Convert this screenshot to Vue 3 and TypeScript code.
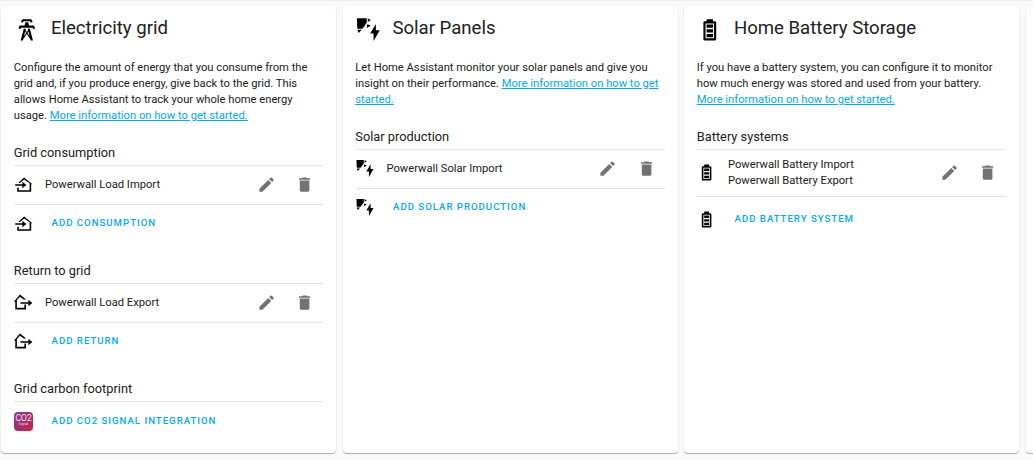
<script setup lang="ts">
interface Row { lines: string[] }
const mdi = {
  tower: 'M8.28,5.45L6.5,4.55L7.76,2H16.23L17.5,4.55L15.72,5.44L15,4H9L8.28,5.45M18.62,8H14.09L13.3,5H10.7L9.91,8H5.38L4.1,10.55L5.89,11.44L6.62,10H17.38L18.1,11.45L19.89,10.56L18.62,8M17.77,22H15.7L15.46,21.1L12,15.9L8.53,21.1L8.3,22H6.23L9.12,11H11.19L10.83,12.35L12,14.1L13.16,12.35L12.81,11H14.88L17.77,22M11.4,15L10.5,13.65L9.32,18.13L11.4,15M14.68,18.12L13.5,13.64L12.6,15L14.68,18.12Z',
  solar: 'M1.8 1.2H11V5.2L8.6 8.8L7 11H2.2ZM12 1.2L14.8 3L12 4.8ZM11.2 6.8L14.8 8L11.2 10.2ZM2.2 12H6.4L3.4 15ZM19.5 6.5L14.2 15.5H17.4V22.5L23.2 12.5H19.6Z',
  battery: 'M16,20H8V6H16M16.67,4H15V2H9V4H7.33A1.33,1.33 0 0,0 6,5.33V20.67C6,21.4 6.6,22 7.33,22H16.67A1.33,1.33 0 0,0 18,20.67V5.33C18,4.6 17.4,4 16.67,4M15,16H9V19H15V16M15,7H9V10H15V7M15,11.5H9V14.5H15V11.5Z',
  homeImport: 'M12.7 3L23 11.5H21.5V21H4V16H6V19H19.5V10.3L12.7 5.6L7.5 10H5.2ZM1.5 11.5H10.5V8.5L15.5 12.5L10.5 16.5V13.5H1.5Z',
  homeExport: 'M7.5 2L15.2 8H12.2L7.5 4.6L3.6 8.8V18.5H13V14.5H15V20.5H1.6V11H-.2ZM8 11.5H18V8.5L23 12.5L18 16.5V13.5H8Z',
  pencil: 'M20.71,7.04C21.1,6.65 21.1,6 20.71,5.63L18.37,3.29C18,2.9 17.35,2.9 16.96,3.29L15.12,5.12L18.87,8.87M3,17.25V21H6.75L17.81,9.93L14.06,6.18L3,17.25Z',
  trash: 'M19,4H15.5L14.5,3H9.5L8.5,4H5V6H19M6,19A2,2 0 0,0 8,21H16A2,2 0 0,0 18,19V7H6V19Z',
}
const gridRows: Row[] = [{ lines: ['Powerwall Load Import'] }]
const returnRows: Row[] = [{ lines: ['Powerwall Load Export'] }]
const solarRows: Row[] = [{ lines: ['Powerwall Solar Import'] }]
const batteryRows: Row[] = [{ lines: ['Powerwall Battery Import', 'Powerwall Battery Export'] }]
const linkText = 'More information on how to get started.'
</script>

<template>
  <div class="page">
    <section class="card">
      <header class="head">
        <svg class="head-icon" viewBox="0 0 24 24"><path :d="mdi.tower" /></svg>
        <h2>Electricity grid</h2>
      </header>
      <p class="desc">Configure the amount of energy that you consume from the grid and, if you produce energy, give back to the grid. This allows Home Assistant to track your whole home energy usage. <a href="#">{{ linkText }}</a></p>

      <h3>Grid consumption</h3>
      <div v-for="r in gridRows" :key="r.lines[0]" class="row">
        <svg class="icon" viewBox="0 0 24 24"><path :d="mdi.homeImport" /></svg>
        <div class="label"><div v-for="l in r.lines" :key="l">{{ l }}</div></div>
        <svg class="act" viewBox="0 0 24 24"><path :d="mdi.pencil" /></svg>
        <svg class="act" viewBox="0 0 24 24"><path :d="mdi.trash" /></svg>
      </div>
      <div class="add">
        <svg class="icon" viewBox="0 0 24 24"><path :d="mdi.homeImport" /></svg>
        <button type="button">ADD CONSUMPTION</button>
      </div>

      <h3 class="next">Return to grid</h3>
      <div v-for="r in returnRows" :key="r.lines[0]" class="row">
        <svg class="icon" viewBox="0 0 24 24"><path :d="mdi.homeExport" /></svg>
        <div class="label"><div v-for="l in r.lines" :key="l">{{ l }}</div></div>
        <svg class="act" viewBox="0 0 24 24"><path :d="mdi.pencil" /></svg>
        <svg class="act" viewBox="0 0 24 24"><path :d="mdi.trash" /></svg>
      </div>
      <div class="add">
        <svg class="icon" viewBox="0 0 24 24"><path :d="mdi.homeExport" /></svg>
        <button type="button">ADD RETURN</button>
      </div>

      <h3 class="next">Grid carbon footprint</h3>
      <div class="add co2-row">
        <div class="co2"><span class="co2-a">CO2</span><span class="co2-b">Signal</span></div>
        <button type="button">ADD CO2 SIGNAL INTEGRATION</button>
      </div>
    </section>

    <section class="card">
      <header class="head">
        <svg class="head-icon" viewBox="0 0 24 24"><path :d="mdi.solar" /></svg>
        <h2>Solar Panels</h2>
      </header>
      <p class="desc">Let Home Assistant monitor your solar panels and give you insight on their performance. <a href="#">{{ linkText }}</a></p>
      <h3>Solar production</h3>
      <div v-for="r in solarRows" :key="r.lines[0]" class="row">
        <svg class="icon" viewBox="0 0 24 24"><path :d="mdi.solar" /></svg>
        <div class="label"><div v-for="l in r.lines" :key="l">{{ l }}</div></div>
        <svg class="act" viewBox="0 0 24 24"><path :d="mdi.pencil" /></svg>
        <svg class="act" viewBox="0 0 24 24"><path :d="mdi.trash" /></svg>
      </div>
      <div class="add">
        <svg class="icon" viewBox="0 0 24 24"><path :d="mdi.solar" /></svg>
        <button type="button">ADD SOLAR PRODUCTION</button>
      </div>
    </section>

    <section class="card">
      <header class="head">
        <svg class="head-icon" viewBox="0 0 24 24"><path :d="mdi.battery" /></svg>
        <h2>Home Battery Storage</h2>
      </header>
      <p class="desc">If you have a battery system, you can configure it to monitor how much energy was stored and used from your battery. <a href="#">{{ linkText }}</a></p>
      <h3>Battery systems</h3>
      <div v-for="r in batteryRows" :key="r.lines[0]" class="row tall">
        <svg class="icon" viewBox="0 0 24 24"><path :d="mdi.battery" /></svg>
        <div class="label"><div v-for="l in r.lines" :key="l">{{ l }}</div></div>
        <svg class="act" viewBox="0 0 24 24"><path :d="mdi.pencil" /></svg>
        <svg class="act" viewBox="0 0 24 24"><path :d="mdi.trash" /></svg>
      </div>
      <div class="add tall-add">
        <svg class="icon" viewBox="0 0 24 24"><path :d="mdi.battery" /></svg>
        <button type="button">ADD BATTERY SYSTEM</button>
      </div>
    </section>

    <section class="card"></section>
  </div>
</template>

<style scoped>
.page {
  height: 460px;
  width: 1033px;
  box-sizing: border-box;
  overflow: hidden;
  background: #fafafa;
  border-top: 1px solid #eeeeee;
  padding: 5px 0 0 1px;
  display: grid;
  grid-template-columns: repeat(4, 335px);
  grid-template-rows: 447px;
  column-gap: 6.5px;
  font-family: Roboto, "Liberation Sans", sans-serif;
  color: #212121;
}
.card {
  background: #ffffff;
  border-radius: 4px;
  box-shadow: 0 1px 1px rgba(0, 0, 0, 0.3), 0 0 2px rgba(0, 0, 0, 0.06);
  padding: 0 12.8px;
  box-sizing: border-box;
}
.head {
  display: flex;
  align-items: center;
  height: 44px;
  gap: 11.5px;
}
.head-icon {
  width: 25.6px;
  height: 25.6px;
  flex: none;
  margin-top: 3px;
}
h2 {
  margin: 0 0 1px;
  font-size: 18.6px;
  font-weight: 400;
  line-height: 26px;
}
.desc {
  margin: 10px 0 0;
  font-size: 11.2px;
  line-height: 16px;
}
a {
  color: #03a9f4;
  text-decoration: underline;
}
h3 {
  margin: 12px 0 0;
  height: 30px;
  box-sizing: border-box;
  padding-top: 9px;
  border-bottom: 1px solid #e3e3e3;
  font-size: 12.8px;
  font-weight: 400;
  line-height: 16px;
}
h3.next {
  margin-top: 11px;
  padding-top: 10px;
  height: 31px;
}
.row {
  display: flex;
  align-items: center;
  height: 38.8px;
  box-sizing: border-box;
  border-bottom: 1px solid #e3e3e3;
}
.row.tall {
  height: 46.6px;
}
.icon {
  width: 19.2px;
  height: 19.2px;
  flex: none;
}
.label {
  flex: 1;
  margin-left: 12px;
  font-size: 11.2px;
  line-height: 16px;
}
.act {
  width: 19.2px;
  height: 19.2px;
  flex: none;
  margin-right: 19.2px;
  fill: #727272;
}
.act:last-child {
  margin-right: 9px;
}
.add {
  display: flex;
  align-items: center;
  height: 37px;
  margin-bottom: 1.4px;
}
.tall-add {
  margin-top: 4px;
}
.co2-row {
  margin-top: 1px;
}
button {
  margin-left: 18.6px;
  padding: 0;
  border: 0;
  background: none;
  color: #03a9f4;
  font-family: inherit;
  font-size: 9.6px;
  font-weight: 500;
  letter-spacing: 1px;
  line-height: 16px;
}
.co2 {
  width: 19.2px;
  height: 19.2px;
  flex: none;
  border-radius: 4px;
  background: linear-gradient(135deg, #7a3f98 0%, #a92c6c 55%, #c9243f 100%);
  color: #f4dfe8;
  display: flex;
  flex-direction: column;
  align-items: center;
  justify-content: center;
  line-height: 1;
}
.co2-a {
  font-size: 9px;
  letter-spacing: -0.2px;
}
.co2-b {
  font-size: 3.5px;
  margin-bottom: 1px;
}
</style>
